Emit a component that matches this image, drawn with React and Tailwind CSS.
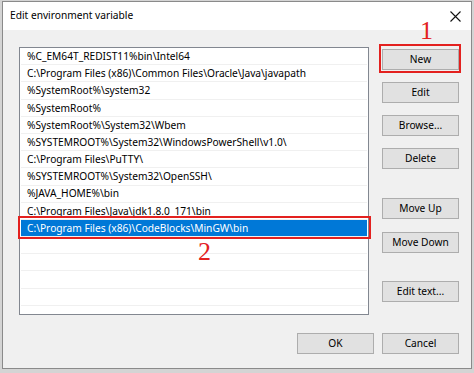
const paths = [
  "%C_EM64T_REDIST11%bin\\Intel64",
  "C:\\Program Files (x86)\\Common Files\\Oracle\\Java\\javapath",
  "%SystemRoot%\\system32",
  "%SystemRoot%",
  "%SystemRoot%\\System32\\Wbem",
  "%SYSTEMROOT%\\System32\\WindowsPowerShell\\v1.0\\",
  "C:\\Program Files\\PuTTY\\",
  "%SYSTEMROOT%\\System32\\OpenSSH\\",
  "%JAVA_HOME%\\bin",
  "C:\\Program Files\\Java\\jdk1.8.0_171\\bin",
  "C:\\Program Files (x86)\\CodeBlocks\\MinGW\\bin",
  "",
  "",
  "",
  "",
  "",
]

const Btn = ({ children, className = "" }) => (
  <div
    className={`h-[21px] w-[77px] flex items-center justify-center bg-[#e1e1e1] border border-[#adadad] text-[10.2px] text-black ${className}`}
  >
    {children}
  </div>
)

const App = () => {
  return (
    <div
      className="w-[474px] h-[373px] bg-[#d4d4d4] pl-[2px] pt-[1px] overflow-hidden"
      style={{ fontFamily: '"Noto Sans", "Open Sans", sans-serif' }}
    >
      <div className="w-[470px] h-[368px] border border-[#8a8a8a] bg-[#f0f0f0] flex flex-col">

        {/* Title bar */}
        <div className="h-[28px] bg-white flex items-center justify-between pl-[7px] pr-[8px]">
          <span className="text-[10.2px] text-black">Edit environment variable</span>
          <svg width="11" height="11" viewBox="0 0 11 11" className="mr-[2px]">
            <path d="M0.5 0.5 L10.5 10.5 M10.5 0.5 L0.5 10.5" stroke="#111" strokeWidth="1.1" />
          </svg>
        </div>

        {/* Body */}
        <div className="flex flex-1 pl-[16px] pt-[17px] relative">

          {/* List */}
          <div className="w-[350px] h-[268px] bg-white border border-[#828790] px-[1px] overflow-hidden">
            {paths.map((p, i) => (
              <div
                key={i}
                className={`h-[17.2px] flex items-center pl-[6px] border-b border-[#f0f0f0] text-[10.2px] leading-none whitespace-nowrap ${
                  i === 10 ? "bg-[#0078d7] text-white" : "text-black"
                }`}
              >
                {p}
              </div>
            ))}
          </div>

          {/* Buttons */}
          <div className="flex flex-col ml-[13px] pt-[2px]">
            <Btn>New</Btn>
            <Btn className="mt-[12px]">Edit</Btn>
            <Btn className="mt-[12px]">Browse...</Btn>
            <Btn className="mt-[12px]">Delete</Btn>
            <Btn className="mt-[29px]">Move Up</Btn>
            <Btn className="mt-[13px]">Move Down</Btn>
            <Btn className="mt-[28px]">Edit text...</Btn>
          </div>

          {/* Annotations */}
          <div className="absolute left-[376px] top-[14px] w-[82px] h-[29px] border-2 border-[#e3211f]" />
          <div
            className="absolute left-[417px] top-[-12px] text-[26px] leading-none text-[#e3211f]"
            style={{ fontFamily: '"Liberation Serif", serif' }}
          >
            1
          </div>
          <div className="absolute left-[15px] top-[186px] w-[353px] h-[23px] border-2 border-[#e3211f]" />
          <div
            className="absolute left-[195px] top-[209px] text-[26px] leading-none text-[#e3211f]"
            style={{ fontFamily: '"Liberation Serif", serif' }}
          >
            2
          </div>
        </div>

        {/* Footer */}
        <div className="flex justify-end gap-[8px] pr-[12px] pb-[14px]">
          <Btn>OK</Btn>
          <Btn>Cancel</Btn>
        </div>
      </div>
    </div>
  )
}

export default App
